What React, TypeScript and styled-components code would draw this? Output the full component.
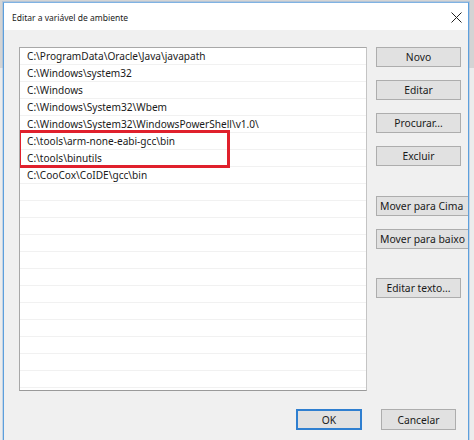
import React from "react";
import styled, { createGlobalStyle } from "styled-components";

const GlobalStyle = createGlobalStyle`
  html, body {
    margin: 0;
    padding: 0;
    background: #e6e6e6;
  }
`;

const Desktop = styled.div`
  width: 474px;
  height: 440px;
  overflow: hidden;
  background: linear-gradient(#d4d4d4 0 68px, #ececec 68px);
  padding: 2px 0 0 3px;
  box-sizing: border-box;
  font-family: "Noto Sans", "DejaVu Sans", sans-serif;
  color: #1a1a1a;
`;

const Window = styled.div`
  width: 466px;
  height: 460px;
  box-sizing: border-box;
  border: 1px solid #5d9fdc;
  border-top-color: #7fb2e3;
  box-shadow: 0 0 0 1px rgba(120, 170, 220, 0.35);
  background: #f0f0f0;
  display: flex;
  flex-direction: column;
  overflow: hidden;
`;

const TitleBar = styled.div`
  height: 27px;
  flex: none;
  background: #ffffff;
  display: flex;
  align-items: center;
  justify-content: space-between;
  padding: 0 6px 0 8px;
`;

const Title = styled.span`
  font-size: 8.5px;
  padding-top: 1px;
`;

const CloseButton = styled.span`
  display: flex;
  width: 11px;
  height: 11px;
  margin-top: 1px;
`;

const Body = styled.div`
  padding: 17px 0 0 15px;
  display: flex;
  flex-direction: column;
`;

const Main = styled.div`
  display: flex;
  align-items: flex-start;
`;

const ListBox = styled.div`
  position: relative;
  flex: none;
  width: 348px;
  height: 344px;
  box-sizing: border-box;
  background: #ffffff;
  border: 1px solid #a8a8a8;
  border-right-color: #c4c4c4;
  border-bottom-color: #9a9a9a;
  overflow: hidden;
`;

const Row = styled.div`
  height: 17px;
  box-sizing: border-box;
  border-bottom: 1px solid #f1f1f1;
  padding-left: 7px;
  font-size: 10.1px;
  line-height: 16px;
  white-space: nowrap;
`;

const Highlight = styled.div`
  position: absolute;
  left: -2px;
  top: 82px;
  width: 212px;
  height: 38px;
  box-sizing: border-box;
  border: 3px solid #e0202c;
`;

const SideButtons = styled.div`
  flex: none;
  display: flex;
  flex-direction: column;
  margin-left: 9px;
  width: 85px;
`;

const Button = styled.button<{ $wide?: boolean; $gap?: number; $primary?: boolean }>`
  flex: none;
  width: ${({ $wide }) => ($wide ? "96px" : "85px")};
  height: 20px;
  margin-top: ${({ $gap }) => $gap ?? 0}px;
  padding: 0;
  background: #e1e1e1;
  border: ${({ $primary }) => ($primary ? "2px solid #2f7fd0" : "1px solid #adadad")};
  font-family: "Noto Sans", "DejaVu Sans", sans-serif;
  font-size: ${({ $wide }) => ($wide ? "10.4px" : "10.3px")};
  color: #1a1a1a;
  text-align: ${({ $wide }) => ($wide ? "left" : "center")};
  padding-left: ${({ $wide }) => ($wide ? "3px" : "0")};
  white-space: nowrap;
  box-sizing: border-box;
`;

const Footer = styled.div`
  display: flex;
  justify-content: flex-end;
  gap: 19px;
  margin-top: 18px;
  padding-right: 12px;
`;

const FooterButton = styled(Button)<{ $w: number }>`
  width: ${({ $w }) => $w}px;
  height: 21px;
  font-size: 10.3px;
  text-align: center;
  padding-left: 0;
`;

const paths = [
  "C:\\ProgramData\\Oracle\\Java\\javapath",
  "C:\\Windows\\system32",
  "C:\\Windows",
  "C:\\Windows\\System32\\Wbem",
  "C:\\Windows\\System32\\WindowsPowerShell\\v1.0\\",
  "C:\\tools\\arm-none-eabi-gcc\\bin",
  "C:\\tools\\binutils",
  "C:\\CooCox\\CoIDE\\gcc\\bin",
];

const App = () => {
  const rows = [...paths, ...Array(12).fill("")];

  return (
    <Desktop>
      <GlobalStyle />
      <Window>
        <TitleBar>
          <Title>Editar a variável de ambiente</Title>
          <CloseButton>
            <svg width="11" height="11" viewBox="0 0 11 11">
              <path d="M0.5 0.5 L10.5 10.5 M10.5 0.5 L0.5 10.5" stroke="#222" strokeWidth="1" fill="none" />
            </svg>
          </CloseButton>
        </TitleBar>
        <Body>
          <Main>
            <ListBox>
              {rows.map((p, i) => (
                <Row key={i}>{p}</Row>
              ))}
              <Highlight />
            </ListBox>
            <SideButtons>
              <Button>Novo</Button>
              <Button $gap={13}>Editar</Button>
              <Button $gap={13}>Procurar...</Button>
              <Button $gap={13}>Excluir</Button>
              <Button $gap={30} $wide>Mover para Cima</Button>
              <Button $gap={13} $wide>Mover para baixo</Button>
              <Button $gap={29}>Editar texto...</Button>
            </SideButtons>
          </Main>
          <Footer>
            <FooterButton $w={66} $primary>OK</FooterButton>
            <FooterButton $w={75}>Cancelar</FooterButton>
          </Footer>
        </Body>
      </Window>
    </Desktop>
  );
};

export default App;
